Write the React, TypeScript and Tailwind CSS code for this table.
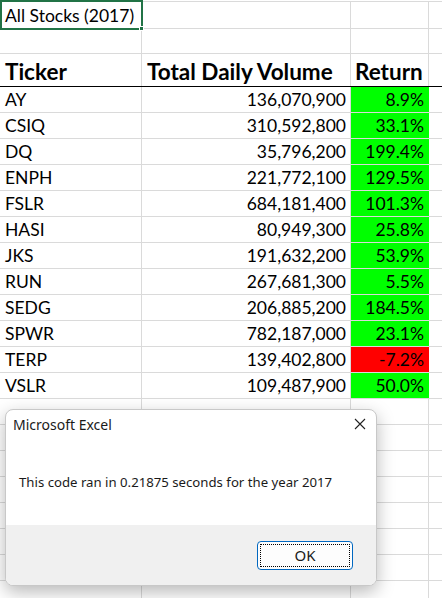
import React from "react";

const rows: [string, string, string, boolean][] = [
  ["AY", "136,070,900", "8.9%", true],
  ["CSIQ", "310,592,800", "33.1%", true],
  ["DQ", "35,796,200", "199.4%", true],
  ["ENPH", "221,772,100", "129.5%", true],
  ["FSLR", "684,181,400", "101.3%", true],
  ["HASI", "80,949,300", "25.8%", true],
  ["JKS", "191,632,200", "53.9%", true],
  ["RUN", "267,681,300", "5.5%", true],
  ["SEDG", "206,885,200", "184.5%", true],
  ["SPWR", "782,187,000", "23.1%", true],
  ["TERP", "139,402,800", "-7.2%", false],
  ["VSLR", "109,487,900", "50.0%", true],
];

function Row({
  h,
  a,
  b,
  c,
  fill,
  bold,
  bottom,
}: {
  h: string;
  a?: string;
  b?: string;
  c?: string;
  fill?: string;
  bold?: boolean;
  bottom?: string;
}) {
  const weight = bold ? "font-bold text-[22.5px]" : "text-[17.5px]";
  return (
    <div className={`flex ${h} border-b ${bottom ?? "border-[#dadada]"}`}>
      <div className={`w-[142px] shrink-0 border-r border-[#dadada] flex items-end pl-[5px] pb-[1px] leading-none ${weight}`}>
        <span className={bold ? "pb-[2px]" : "pb-[3px]"}>{a}</span>
      </div>
      <div className={`w-[209px] shrink-0 border-r border-[#dadada] flex items-end justify-end pr-[4px] leading-none ${bold ? "justify-start pl-[5px]" : ""} ${weight}`}>
        <span className={bold ? "pb-[3px]" : "pb-[4px]"}>{b}</span>
      </div>
      <div
        className={`w-[78px] shrink-0 border-r flex items-end leading-none ${
          fill === "g"
            ? "bg-[#00ff00] border-[#00ff00] justify-end pr-[4px]"
            : fill === "r"
            ? "bg-[#ff0000] border-[#ff0000] justify-end pr-[4px]"
            : "border-[#dadada] pl-[4px]"
        } ${weight}`}
      >
        <span className={bold ? "pb-[3px]" : "pb-[4px]"}>{c}</span>
      </div>
      <div className="flex-1" />
    </div>
  );
}

export default function App() {
  return (
    <div
      className="relative w-[442px] h-[598px] bg-white overflow-hidden text-black"
      style={{ fontFamily: "Lato, 'Open Sans', sans-serif" }}
    >
      <div className="h-[2px] border-b border-[#dadada]" />
      <Row h="h-[27px]" a="All Stocks (2017)" />
      <Row h="h-[25px]" />
      <Row h="h-[33px]" a="Ticker" b="Total Daily Volume" c="Return" bold bottom="border-black" />
      {rows.map(([t, v, r, g]) => (
        <Row key={t} h="h-[26px]" a={t} b={v} c={r} fill={g ? "g" : "r"} />
      ))}
      {Array.from({ length: 8 }).map((_, i) => (
        <Row key={i} h="h-[26px]" />
      ))}

      {/* selection */}
      <div className="absolute left-0 top-0 w-[143px] h-[30px] border-2 border-[#217346]" />
      <div className="absolute left-[139px] top-[26px] w-[5px] h-[5px] bg-[#217346] border border-white" />

      {/* dialog */}
      <div
        className="absolute left-[5px] top-[409px] w-[372px] h-[177px] rounded-[8px] border border-[#c8c8c8] bg-white overflow-hidden flex flex-col shadow-[0_6px_18px_rgba(0,0,0,0.28)]"
        style={{ fontFamily: "'Noto Sans', 'Open Sans', sans-serif" }}
      >
        <div className="h-[115px] flex flex-col">
          <div className="flex items-center justify-between h-[28px] pl-[7px] pr-[8px]">
            <span className="text-[14px] text-[#1a1a1a]">Microsoft Excel</span>
            <svg width="12" height="12" viewBox="0 0 12 12" className="mr-[2px]">
              <path d="M1 1 L11 11 M11 1 L1 11" stroke="#222" strokeWidth="1.1" />
            </svg>
          </div>
          <div className="pl-[13px] pt-[35px] text-[13.2px] text-[#1a1a1a]">
            This code ran in 0.21875 seconds for the year 2017
          </div>
        </div>
        <div className="flex-1 bg-[#f0f0f0] flex justify-end items-start pt-[16px] pr-[23px]">
          <div className="w-[96px] h-[29px] rounded-[4px] border border-[#0067c0] bg-[#fdfdfd] p-[2px]">
            <div className="w-full h-full border border-dotted border-black flex items-center justify-center text-[15px] text-[#1a1a1a]">
              OK
            </div>
          </div>
        </div>
      </div>
    </div>
  );
}
